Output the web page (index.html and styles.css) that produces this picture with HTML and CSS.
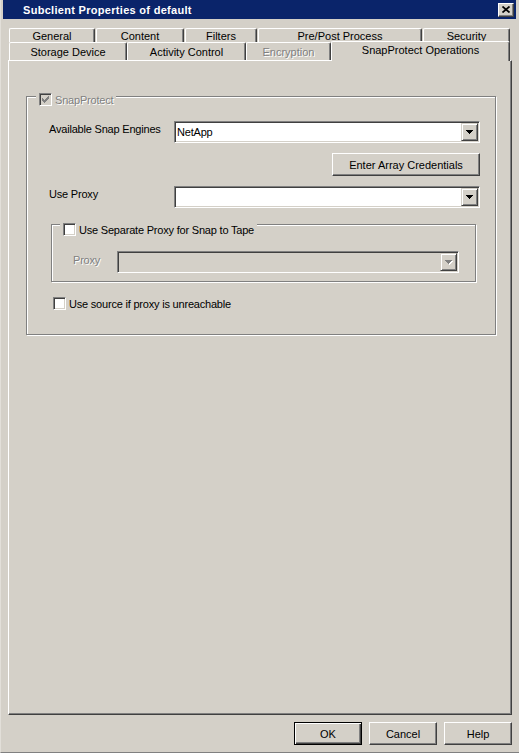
FILE: index.html
```html
<!DOCTYPE html>
<html>
<head>
<meta charset="utf-8">
<link rel="stylesheet" href="styles.css">
</head>
<body>
<div class="window">
  <div class="titlebar">
    <span class="title">Subclient Properties of default</span>
    <span class="close"><svg width="8" height="7" viewBox="0 0 8 7"><path d="M0.5 0.5 L7.5 6.5 M7.5 0.5 L0.5 6.5" stroke="#000" stroke-width="1.7" fill="none"/></svg></span>
  </div>
  <div class="tabs">
    <div class="tabrow back">
      <div class="tab t-general">General</div>
      <div class="tab t-content">Content</div>
      <div class="tab t-filters">Filters</div>
      <div class="tab t-prepost">Pre/Post Process</div>
      <div class="tab t-security">Security</div>
    </div>
    <div class="tabrow front">
      <div class="tab t-storage">Storage Device</div>
      <div class="tab t-activity">Activity Control</div>
      <div class="tab t-encryption dis">Encryption</div>
      <div class="tab t-snap selected">SnapProtect Operations</div>
    </div>
  </div>
  <div class="panel">
    <div class="group main">
      <div class="legend">
        <span class="cb cb-disabled"><svg width="7" height="7" viewBox="0 0 7 7" shape-rendering="crispEdges"><path d="M0 2h1v3H0zM1 3h1v3H1zM2 4h1v3H2zM3 3h1v3H3zM4 2h1v3H4zM5 1h1v3H5zM6 0h1v3H6z" fill="#808080"/></svg></span>
        <span class="dis">SnapProtect</span>
      </div>
      <div class="row r-engines">
        <span class="label">Available Snap Engines</span>
        <div class="combo c-main">
          <span class="value">NetApp</span>
          <span class="drop"><svg width="7" height="4" viewBox="0 0 7 4" shape-rendering="crispEdges"><path d="M0 0h7v1H0zM1 1h5v1H1zM2 2h3v1H2zM3 3h1v1H3z" fill="#000"/></svg></span>
        </div>
      </div>
      <div class="row r-cred">
        <button class="btn cred">Enter Array Credentials</button>
      </div>
      <div class="row r-proxy">
        <span class="label">Use Proxy</span>
        <div class="combo c-main">
          <span class="value"></span>
          <span class="drop"><svg width="7" height="4" viewBox="0 0 7 4" shape-rendering="crispEdges"><path d="M0 0h7v1H0zM1 1h5v1H1zM2 2h3v1H2zM3 3h1v1H3z" fill="#000"/></svg></span>
        </div>
      </div>
      <div class="group inner">
        <div class="legend">
          <span class="cb"></span>
          <span>Use Separate Proxy for Snap to Tape</span>
        </div>
        <div class="row r-inner">
          <span class="label l-proxy dis">Proxy</span>
          <div class="combo c-proxy disabled">
            <span class="value"></span>
            <span class="drop"><svg width="8" height="5" viewBox="0 0 8 5" shape-rendering="crispEdges"><path d="M1 1h7v1H1zM2 2h5v1H2zM3 3h3v1H3zM4 4h1v1H4z" fill="#fff"/><path d="M0 0h7v1H0zM1 1h5v1H1zM2 2h3v1H2zM3 3h1v1H3z" fill="#808080"/></svg></span>
          </div>
        </div>
      </div>
      <div class="check-row">
        <span class="cb"></span>
        <span>Use source if proxy is unreachable</span>
      </div>
    </div>
  </div>
  <div class="footer">
    <button class="btn default">OK</button>
    <button class="btn">Cancel</button>
    <button class="btn">Help</button>
  </div>
</div>
</body>
</html>
```
FILE: styles.css
```css
* { box-sizing: border-box; }

body {
  margin: 0;
  background: #d4d0c8;
  font-family: "Liberation Sans", Arial, sans-serif;
  font-size: 11px;
  color: #000;
  overflow: hidden;
}

.window {
  width: 519px;
  height: 753px;
  border-left: 1px solid #e2dfd9;
  border-bottom: 1px solid #808080;
  display: flex;
  flex-direction: column;
}

.titlebar {
  flex: none;
  margin-left: 2px;
  width: 513px;
  height: 19px;
  background: #0a246a;
  color: #fff;
  font-weight: bold;
  letter-spacing: 0.3px;
  display: flex;
  align-items: center;
  justify-content: space-between;
  padding: 0 2px 0 20px;
}

.close {
  width: 16px;
  height: 14px;
  background: #d4d0c8;
  border: 1px solid;
  border-color: #fff #404040 #404040 #fff;
  box-shadow: inset -1px -1px 0 #808080;
  display: flex;
  align-items: center;
  justify-content: center;
}

.close svg { display: block; }

.tabs {
  flex: none;
  margin: 9px 0 0 8px;
}

.tabrow { display: flex; }
.back { height: 14px; }
.front { height: 18px; }

.tab {
  flex: none;
  background: #d4d0c8;
  border-top: 1px solid #fff;
  border-left: 1px solid #fff;
  border-right: 1px solid #404040;
  box-shadow: inset -1px 0 0 #808080;
  border-radius: 2px 2px 0 0;
  text-align: center;
  white-space: nowrap;
}

.back .tab {
  height: 14px;
  margin-right: 1px;
  padding-top: 1px;
  line-height: 13px;
}

.front .tab {
  height: 18px;
  padding-top: 1px;
  line-height: 16px;
}

.front .tab.selected {
  height: 20px;
  margin-top: -1px;
  padding-top: 0;
  line-height: 16px;
  position: relative;
  z-index: 1;
}

.t-general { width: 86px; }
.t-content { width: 88px; }
.t-filters { width: 72px; }
.t-prepost { width: 164px; }
.t-security { width: 87px; }
.t-storage { width: 118px; }
.t-activity { width: 119px; }
.t-encryption { width: 85px; }
.t-snap { width: 179px; }

.dis {
  color: #808080;
  text-shadow: 1px 1px 0 #fff;
}

.panel {
  flex: none;
  margin-left: 7px;
  width: 504px;
  height: 655px;
  border: 1px solid;
  border-color: #fff #404040 #404040 #fff;
  box-shadow: inset -1px -1px 0 #808080;
  padding: 35px 0 0 17px;
}

.group {
  border: 1px solid #808080;
  box-shadow: 1px 1px 0 #fff, inset 1px 1px 0 #fff;
}

.group.main {
  width: 470px;
  padding-bottom: 24px;
  letter-spacing: -0.2px;
}

.legend {
  display: flex;
  align-items: center;
  gap: 3px;
  width: fit-content;
  height: 13px;
  padding: 0 3px;
  background: #d4d0c8;
  white-space: nowrap;
}

.main > .legend { margin: -4px 0 0 9px; }
.inner > .legend { margin: -2px 0 0 8px; }

.cb {
  flex: none;
  width: 13px;
  height: 13px;
  background: #fff;
  border: 1px solid;
  border-color: #808080 #fff #fff #808080;
  box-shadow: inset 1px 1px 0 #404040, inset -1px -1px 0 #d4d0c8;
  display: flex;
  align-items: center;
  justify-content: center;
}

.cb svg { display: block; }

.cb-disabled { background: #d4d0c8; }

.row {
  display: flex;
  align-items: flex-start;
  padding-left: 22px;
}

.label {
  flex: none;
  width: 125px;
  padding-top: 1px;
  line-height: 14px;
  white-space: nowrap;
}

.combo {
  flex: none;
  height: 22px;
  background: #fff;
  border: 1px solid;
  border-color: #808080 #fff #fff #808080;
  box-shadow: inset 1px 1px 0 #404040, inset -1px -1px 0 #d4d0c8;
  padding: 1px 1px 1px 2px;
  display: flex;
  align-items: center;
  justify-content: space-between;
}

.combo.disabled { background: #d4d0c8; }

.c-main { width: 306px; }
.c-proxy { width: 342px; }

.value { line-height: 14px; }

.drop {
  flex: none;
  width: 17px;
  height: 18px;
  background: #d4d0c8;
  border: 1px solid;
  border-color: #d4d0c8 #404040 #404040 #d4d0c8;
  box-shadow: inset 1px 1px 0 #fff, inset -1px -1px 0 #808080;
  display: flex;
  align-items: center;
  justify-content: center;
}

.drop svg { display: block; }

.r-engines { margin-top: 15px; }

.r-cred {
  margin-top: 10px;
  justify-content: flex-end;
  padding-right: 15px;
}

.r-proxy { margin-top: 10px; }

.group.inner {
  margin: 16px 0 0 24px;
  width: 425px;
  padding-bottom: 8px;
}

.r-inner {
  margin-top: 15px;
  padding-left: 21px;
}

.l-proxy { width: 44px; padding-top: 2px; }

.check-row {
  display: flex;
  align-items: center;
  gap: 3px;
  margin: 15px 0 0 26px;
  white-space: nowrap;
}

.btn {
  width: 68px;
  height: 23px;
  padding: 0;
  font-family: inherit;
  font-size: 11px;
  letter-spacing: 0;
  color: #000;
  background: #d4d0c8;
  border: 1px solid;
  border-color: #fff #404040 #404040 #fff;
  box-shadow: inset -1px -1px 0 #808080;
  border-radius: 0;
}

.btn.cred { width: 148px; }

.btn.default {
  border-color: #000;
  box-shadow: inset 1px 1px 0 #fff, inset -1px -1px 0 #404040, inset -2px -2px 0 #808080;
}

.footer {
  flex: none;
  margin-top: 7px;
  display: flex;
  justify-content: flex-end;
  gap: 7px;
  padding-right: 7px;
}
```
